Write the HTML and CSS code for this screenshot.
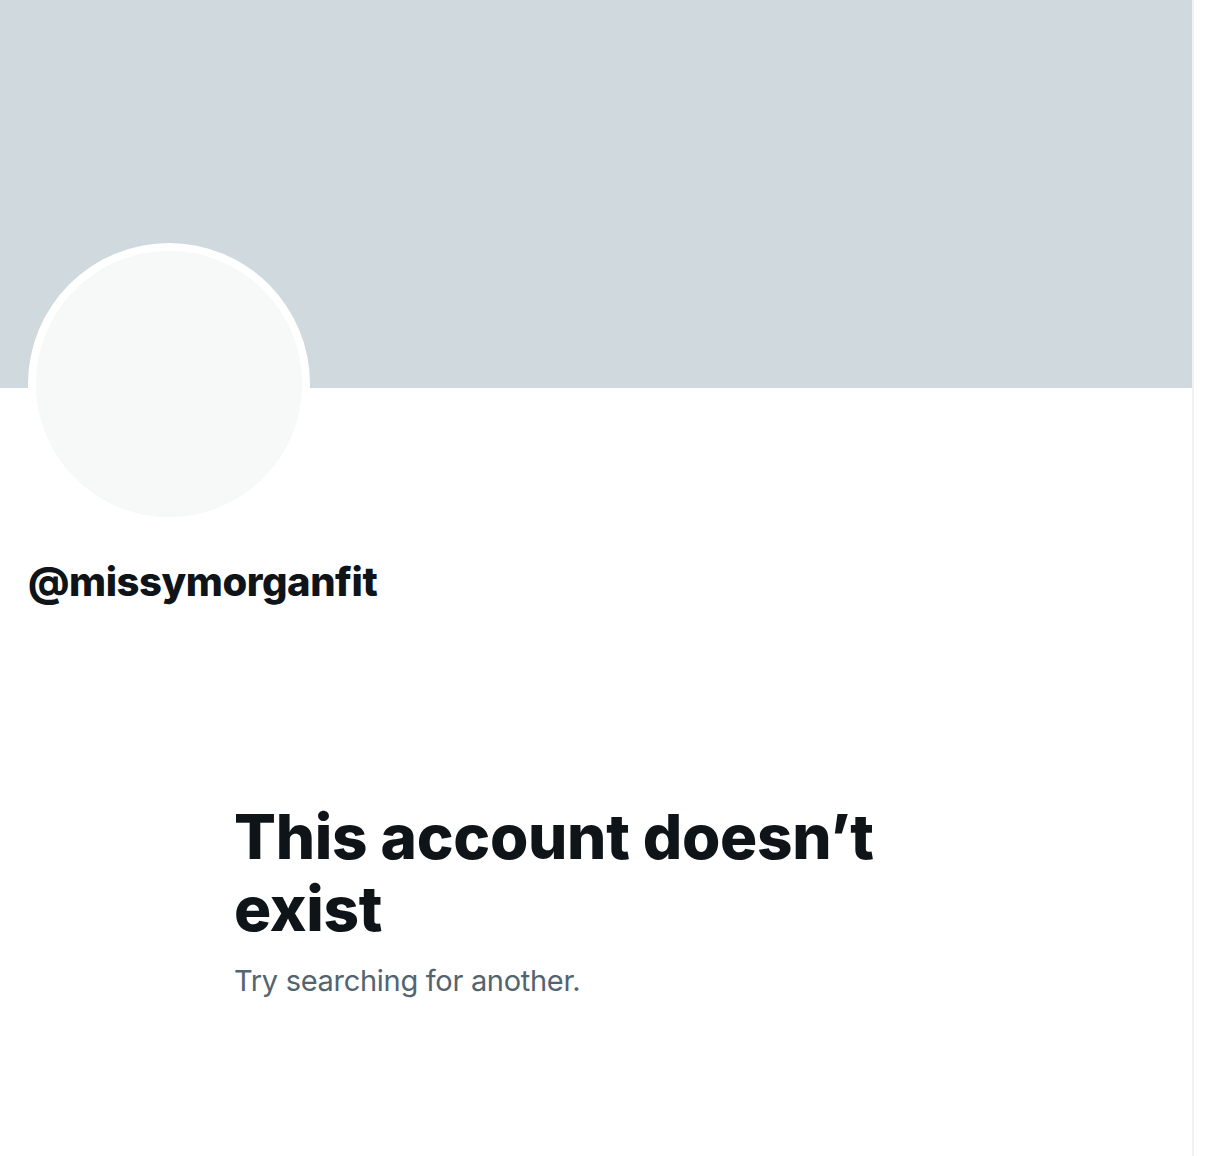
FILE: index.html
```html
<!DOCTYPE html>
<html lang="en">
<head>
<meta charset="utf-8">
<title>Profile</title>
<link rel="stylesheet" href="styles.css">
</head>
<body>
<main class="column">
  <div class="banner"></div>
  <div class="profile-head">
    <div class="avatar"><div class="avatar-inner"></div></div>
    <div class="handle">@missymorganfit</div>
  </div>
  <section class="empty">
    <h1 class="empty-title">This account doesn’t exist</h1>
    <p class="empty-sub">Try searching for another.</p>
  </section>
</main>
</body>
</html>
```
FILE: styles.css
```css
html, body {
  margin: 0;
  padding: 0;
  background: #ffffff;
}
body {
  font-family: Inter, "Noto Sans", "Liberation Sans", sans-serif;
  color: #0f1419;
}
.column {
  width: 1192px;
  min-height: 100vh;
  border-right: 2px solid #eff3f4;
  box-sizing: content-box;
}
.banner {
  height: 388px;
  background: #cfd9de;
}
.profile-head {
  padding: 0 28px;
}
.avatar {
  width: 282px;
  height: 282px;
  margin-top: -145px;
  border-radius: 50%;
  background: #ffffff;
  padding: 8px;
  box-sizing: border-box;
}
.avatar-inner {
  width: 100%;
  height: 100%;
  border-radius: 50%;
  background: #f7f9f9;
  box-shadow: inset 0 0 1px rgba(0,0,0,0.04);
}
.handle {
  margin-top: 33px;
  font-size: 40px;
  line-height: 48px;
  font-weight: 800;
  letter-spacing: -0.45px;
}
.empty {
  padding: 195px 0 0 234px;
  width: 700px;
}
.empty-title {
  margin: 0;
  font-size: 62px;
  line-height: 72px;
  font-weight: 800;
  letter-spacing: -0.3px;
}
.empty-sub {
  margin: 16px 0 0;
  font-size: 29px;
  line-height: 40px;
  font-weight: 400;
  letter-spacing: -0.3px;
  color: #536471;
}
```
